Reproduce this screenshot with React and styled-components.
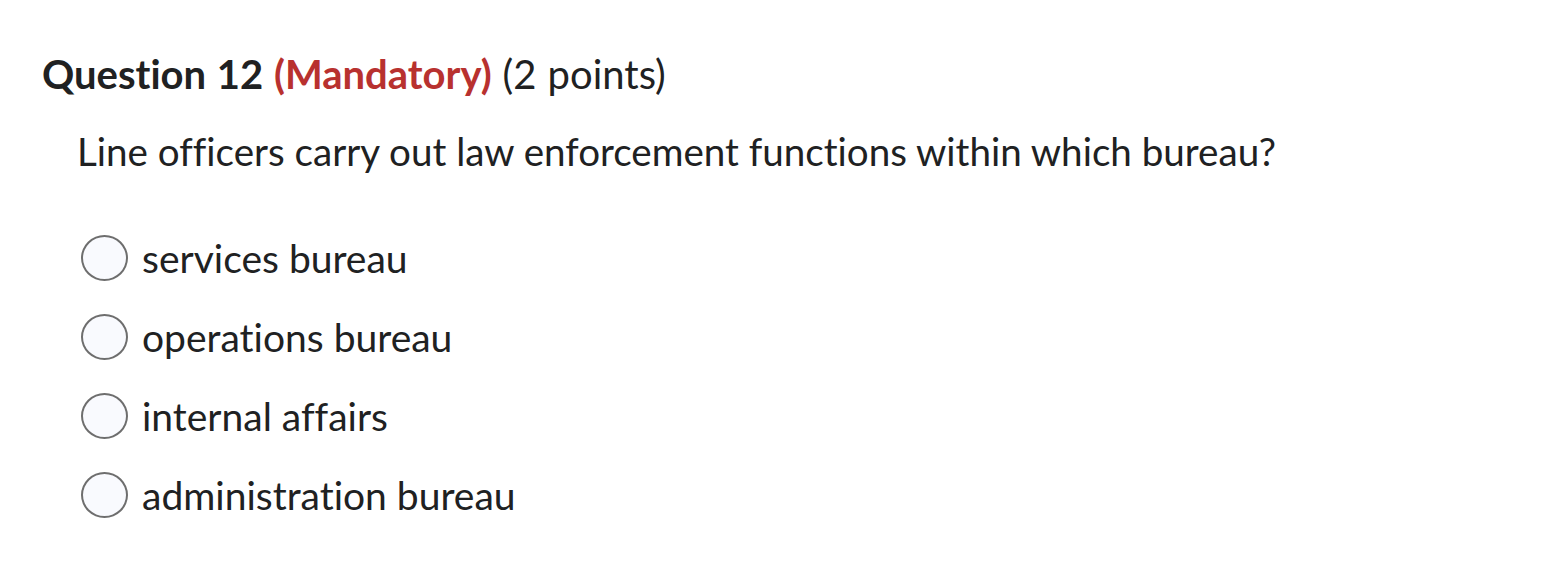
import React from "react";
import styled, { createGlobalStyle } from "styled-components";

const GlobalStyle = createGlobalStyle`
  html, body {
    margin: 0;
    padding: 0;
    background: #ffffff;
  }
  body {
    font-family: Lato, "Noto Sans", sans-serif;
    font-variant-ligatures: none;
    color: #202122;
  }
`;

const Page = styled.div`
  padding: 52px 0 0 42px;
`;

const Heading = styled.h2`
  margin: 0;
  font-size: 40px;
  font-weight: 700;
  line-height: 44px;
  color: #202122;
  word-spacing: 1px;
`;

const Mandatory = styled.span`
  color: #b8312f;
`;

const Points = styled.span`
  font-weight: 400;
`;

const Prompt = styled.p`
  margin: 32px 0 0 35px;
  font-size: 38.6px;
  line-height: 46px;
`;

const Options = styled.div`
  display: flex;
  flex-direction: column;
  gap: 33px;
  margin: 61px 0 0 39px;
`;

const Option = styled.label`
  display: flex;
  align-items: center;
  gap: 14px;
  font-size: 39px;
  line-height: 46px;
`;

const Radio = styled.span`
  box-sizing: border-box;
  width: 47px;
  height: 46px;
  border-radius: 50%;
  border: 2px solid #6e6e6e;
  background: #f9fafe;
  flex-shrink: 0;
`;

const choices = [
  "services bureau",
  "operations bureau",
  "internal affairs",
  "administration bureau",
];

export default function App() {
  return (
    <>
      <GlobalStyle />
      <Page>
        <Heading>
          Question 12 <Mandatory>(Mandatory)</Mandatory> <Points>(2 points)</Points>
        </Heading>
        <Prompt>Line officers carry out law enforcement functions within which bureau?</Prompt>
        <Options>
          {choices.map((c) => (
            <Option key={c}>
              <Radio />
              {c}
            </Option>
          ))}
        </Options>
      </Page>
    </>
  );
}
